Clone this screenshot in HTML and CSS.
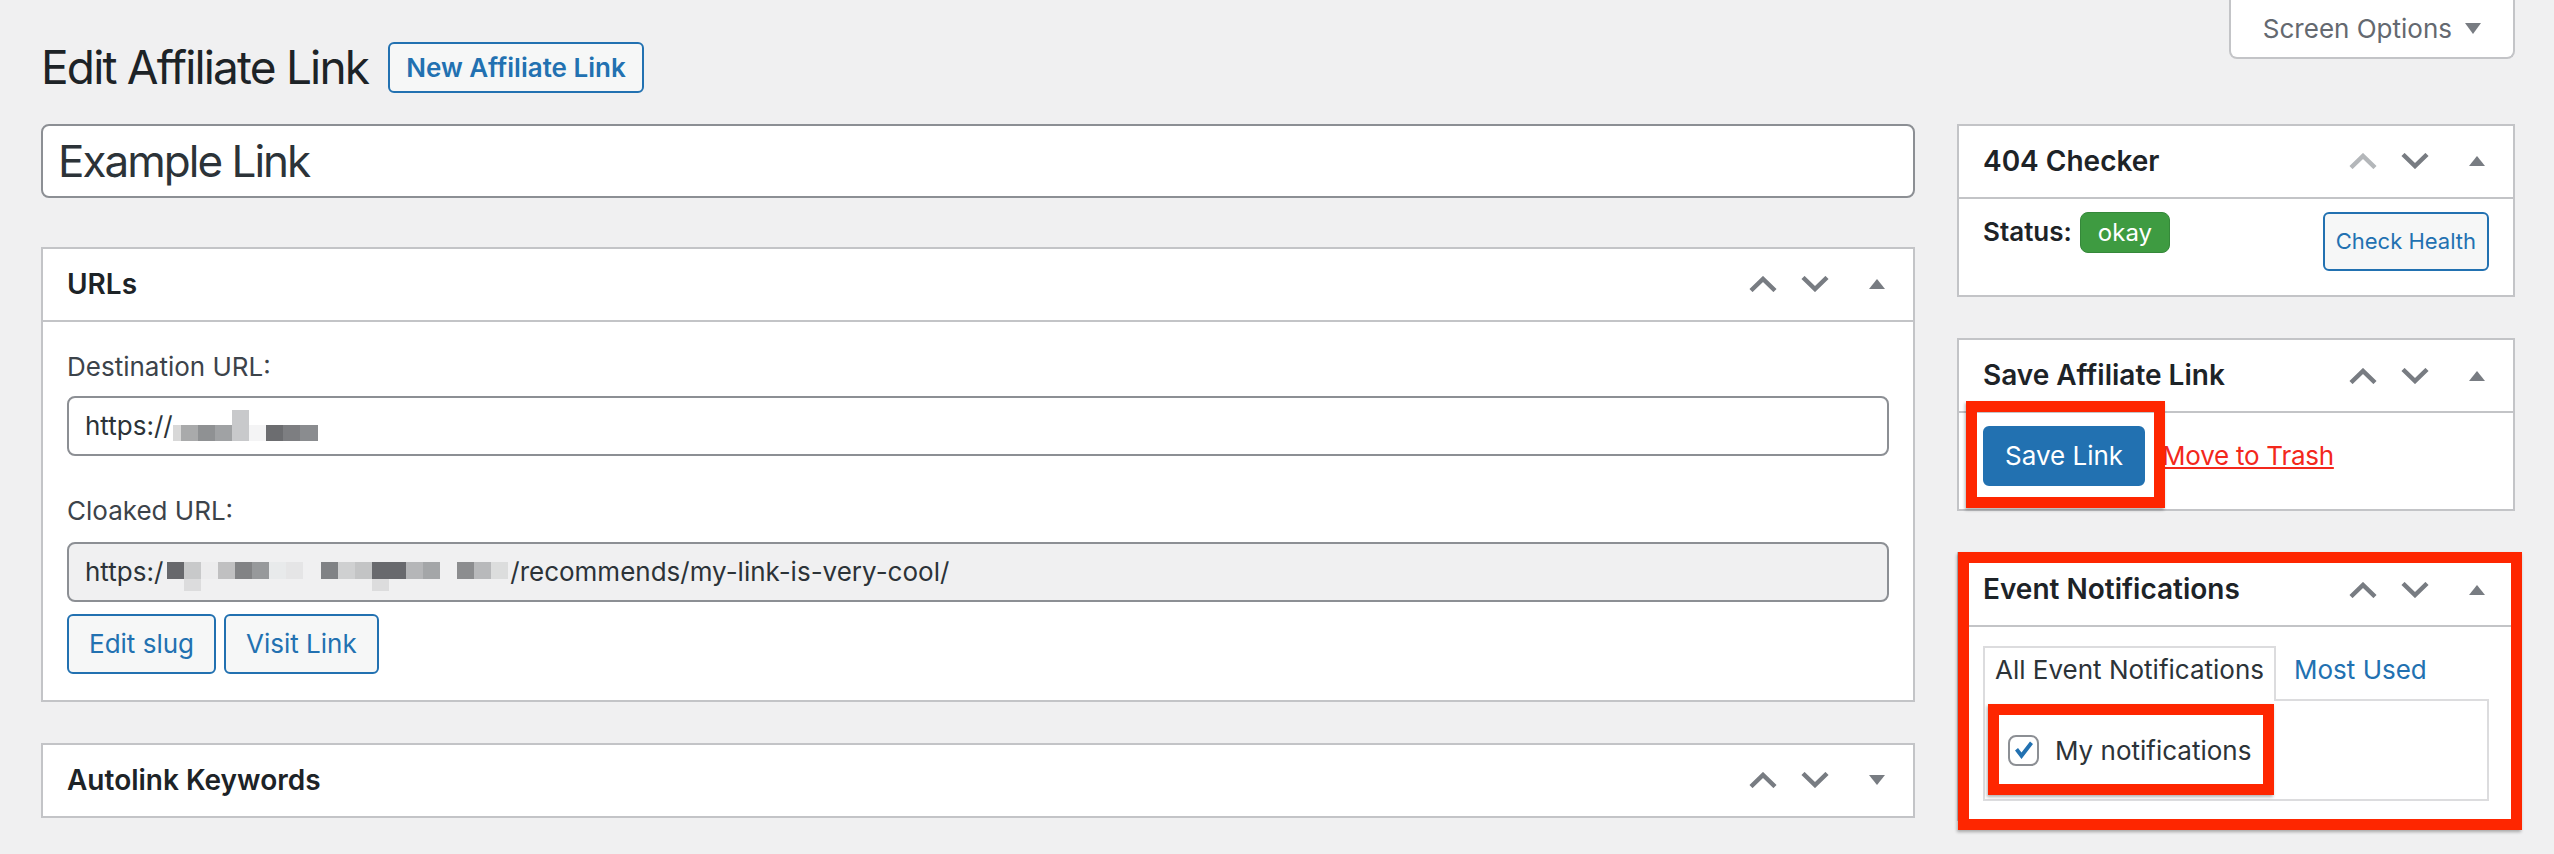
FILE: index.html
```html
<!DOCTYPE html>
<html lang="en">
<head>
    <meta charset="UTF-8">
    <meta name="viewport" content="width=device-width, initial-scale=1.0">
    <title>Edit Affiliate Link</title>
    <link rel="stylesheet" href="styles.css">
</head>
<body>
<div class="wrap">

    <div class="page-top">
        <div class="title-row">
            <h1>Edit Affiliate Link</h1>
            <a class="page-title-action" href="#">New Affiliate Link</a>
        </div>
        <button class="screen-options">Screen Options
            <svg width="16" height="11" viewBox="0 0 16 11"><path d="M0 0 H16 L8 11 Z" fill="currentColor"/></svg>
        </button>
    </div>

    <div class="post-body">
        <div class="main-col">
            <input class="title-input" type="text" value="Example Link">

            <div class="postbox urls">
                <div class="postbox-header">
                    <h2>URLs</h2>
                    <div class="handle-actions">
                        <button class="handle-btn"><svg width="28" height="16" viewBox="0 0 28 16"><path d="M2 14.5 L14 3 L26 14.5" fill="none" stroke="currentColor" stroke-width="4.5"/></svg></button>
                        <button class="handle-btn"><svg width="28" height="16" viewBox="0 0 28 16"><path d="M2 1.5 L14 13 L26 1.5" fill="none" stroke="currentColor" stroke-width="4.5"/></svg></button>
                        <button class="handle-btn toggle"><svg width="16" height="10" viewBox="0 0 16 10"><path d="M8 0 L16 10 H0 Z" fill="currentColor"/></svg></button>
                    </div>
                </div>
                <div class="inside">
                    <span class="field-label">Destination URL:</span>
                    <div class="field">https://<span class="mosaic dest"></span></div>

                    <span class="field-label second">Cloaked URL:</span>
                    <div class="field readonly">https:/<span class="mosaic cloak"></span>/recommends/my-link-is-very-cool/</div>

                    <div class="url-actions">
                        <button class="button">Edit slug</button>
                        <button class="button">Visit Link</button>
                    </div>
                </div>
            </div>

            <div class="postbox closed">
                <div class="postbox-header">
                    <h2>Autolink Keywords</h2>
                    <div class="handle-actions">
                        <button class="handle-btn"><svg width="28" height="16" viewBox="0 0 28 16"><path d="M2 14.5 L14 3 L26 14.5" fill="none" stroke="currentColor" stroke-width="4.5"/></svg></button>
                        <button class="handle-btn"><svg width="28" height="16" viewBox="0 0 28 16"><path d="M2 1.5 L14 13 L26 1.5" fill="none" stroke="currentColor" stroke-width="4.5"/></svg></button>
                        <button class="handle-btn toggle"><svg width="16" height="10" viewBox="0 0 16 10"><path d="M0 0 H16 L8 10 Z" fill="currentColor"/></svg></button>
                    </div>
                </div>
            </div>
        </div>

        <div class="side-col">
            <div class="postbox">
                <div class="postbox-header">
                    <h2>404 Checker</h2>
                    <div class="handle-actions">
                        <button class="handle-btn disabled"><svg width="28" height="16" viewBox="0 0 28 16"><path d="M2 14.5 L14 3 L26 14.5" fill="none" stroke="currentColor" stroke-width="4.5"/></svg></button>
                        <button class="handle-btn"><svg width="28" height="16" viewBox="0 0 28 16"><path d="M2 1.5 L14 13 L26 1.5" fill="none" stroke="currentColor" stroke-width="4.5"/></svg></button>
                        <button class="handle-btn toggle"><svg width="16" height="10" viewBox="0 0 16 10"><path d="M8 0 L16 10 H0 Z" fill="currentColor"/></svg></button>
                    </div>
                </div>
                <div class="inside status-row">
                    <div class="status">Status: <span class="badge">okay</span></div>
                    <button class="button small">Check Health</button>
                </div>
            </div>

            <div class="postbox">
                <div class="postbox-header">
                    <h2>Save Affiliate Link</h2>
                    <div class="handle-actions">
                        <button class="handle-btn"><svg width="28" height="16" viewBox="0 0 28 16"><path d="M2 14.5 L14 3 L26 14.5" fill="none" stroke="currentColor" stroke-width="4.5"/></svg></button>
                        <button class="handle-btn"><svg width="28" height="16" viewBox="0 0 28 16"><path d="M2 1.5 L14 13 L26 1.5" fill="none" stroke="currentColor" stroke-width="4.5"/></svg></button>
                        <button class="handle-btn toggle"><svg width="16" height="10" viewBox="0 0 16 10"><path d="M8 0 L16 10 H0 Z" fill="currentColor"/></svg></button>
                    </div>
                </div>
                <div class="inside publish-row">
                    <span class="callout save-callout"><button class="button primary">Save Link</button></span>
                    <a class="trash-link" href="#">Move to Trash</a>
                </div>
            </div>

            <div class="postbox callout-box">
                <div class="postbox-header">
                    <h2>Event Notifications</h2>
                    <div class="handle-actions">
                        <button class="handle-btn"><svg width="28" height="16" viewBox="0 0 28 16"><path d="M2 14.5 L14 3 L26 14.5" fill="none" stroke="currentColor" stroke-width="4.5"/></svg></button>
                        <button class="handle-btn"><svg width="28" height="16" viewBox="0 0 28 16"><path d="M2 1.5 L14 13 L26 1.5" fill="none" stroke="currentColor" stroke-width="4.5"/></svg></button>
                        <button class="handle-btn toggle"><svg width="16" height="10" viewBox="0 0 16 10"><path d="M8 0 L16 10 H0 Z" fill="currentColor"/></svg></button>
                    </div>
                </div>
                <div class="inside events">
                    <div class="tabs">
                        <span class="tab active">All Event Notifications</span>
                        <a class="tab-link" href="#">Most Used</a>
                    </div>
                    <div class="tabs-panel">
                        <label class="check-row callout">
                            <span class="checkbox"><svg width="27" height="27" viewBox="0 0 27 27"><path d="M5 13.5 L8 11 L11.5 15.5 L20 4.5 L23 7 L11.5 22 Z" fill="#2271b1"/></svg></span>
                            My notifications
                        </label>
                    </div>
                </div>
            </div>
        </div>
    </div>

</div>
</body>
</html>
```

FILE: styles.css
```css
* {
  box-sizing: border-box;
}

body {
  margin: 0;
  background: #f0f0f1;
  color: #3c434a;
  font-family: Inter, "Liberation Sans", sans-serif;
  font-size: 26px;
  line-height: 1.4;
}

button {
  font-family: inherit;
  cursor: pointer;
}

.wrap {
  padding: 0 39px 0 41px;
}

/* top of the page */
.page-top {
  display: flex;
  justify-content: space-between;
  align-items: flex-start;
  margin-bottom: 26px;
}

.title-row {
  display: flex;
  align-items: center;
  gap: 20px;
  padding-top: 38px;
}

h1 {
  margin: 0;
  font-size: 46px;
  font-weight: 400;
  line-height: 1.3;
  letter-spacing: -0.04em;
  color: #1d2327;
}

.page-title-action {
  padding: 8px 16px;
  border: 2px solid #2271b1;
  border-radius: 6px;
  background: #f6f7f7;
  color: #2271b1;
  font-size: 26px;
  font-weight: 600;
  line-height: 31px;
  text-decoration: none;
}

.screen-options {
  display: flex;
  align-items: center;
  gap: 13px;
  height: 59px;
  padding: 0 32px;
  border: 2px solid #c3c4c7;
  border-top: 0;
  border-radius: 0 0 8px 8px;
  background: #fff;
  color: #646970;
  font-size: 26px;
}

.screen-options svg {
  color: #787c82;
}

/* columns */
.post-body {
  display: flex;
  align-items: flex-start;
  gap: 42px;
}

.main-col {
  flex: 1;
}

.side-col {
  width: 558px;
}

.title-input {
  display: block;
  width: 100%;
  height: 74px;
  margin: 0 0 49px;
  padding: 0 15px;
  border: 2px solid #8c8f94;
  border-radius: 8px;
  background: #fff;
  color: #2c3338;
  font-family: inherit;
  font-size: 44px;
  letter-spacing: -0.045em;
}

/* postboxes */
.postbox {
  position: relative;
  margin-bottom: 41px;
  border: 2px solid #c3c4c7;
  background: #fff;
}

.postbox-header {
  display: flex;
  justify-content: space-between;
  align-items: center;
  border-bottom: 2px solid #c3c4c7;
}

.closed .postbox-header {
  border-bottom: 0;
}

.postbox h2 {
  margin: 0;
  padding: 16px 24px;
  font-size: 28px;
  font-weight: 600;
  line-height: 1.4;
  color: #1d2327;
}

.handle-actions {
  display: flex;
  align-self: stretch;
}

.handle-btn {
  display: flex;
  align-items: center;
  justify-content: center;
  width: 52px;
  padding: 0;
  border: 0;
  background: none;
  color: #787c82;
}

.handle-btn.toggle {
  width: 72px;
}

.handle-btn.disabled {
  color: #b4b7ba;
}

.inside {
  padding: 13px 24px 24px;
}

.urls .inside {
  padding: 27px 24px 26px;
}

.field-label {
  display: block;
  margin-bottom: 11px;
}

.field-label.second {
  margin-top: 37px;
  margin-bottom: 12px;
}

.field {
  height: 60px;
  padding: 0 16px;
  border: 2px solid #8c8f94;
  border-radius: 8px;
  color: #2c3338;
  line-height: 56px;
  white-space: nowrap;
}

.field.readonly {
  background: #f0f0f1;
}

/* blurred parts of the urls */
.mosaic {
  display: inline-block;
}

.mosaic.dest {
  width: 145px;
  height: 31px;
  vertical-align: -6px;
  background:
    linear-gradient(#c8c9cb, #c8c9cb) 59px 0 / 17px 15px no-repeat,
    linear-gradient(to right, #d8d8d8 0 8px, #a9aaab 8px 25px, #8f9193 25px 42px, #a0a2a4 42px 59px,
      #c8c9cb 59px 76px, #f4f4f5 76px 93px, #6c6d70 93px 110px, #7d7e81 110px 127px, #8a8c8f 127px 145px) 0 15px / 145px 16px no-repeat;
}

.mosaic.cloak {
  width: 341px;
  height: 29px;
  margin: 0 2px 0 4px;
  vertical-align: -10px;
  background:
    linear-gradient(#dcdcdd, #dcdcdd) 17px 17px / 17px 12px no-repeat,
    linear-gradient(#dcdcdd, #dcdcdd) 205px 17px / 17px 12px no-repeat,
    linear-gradient(to right, #67686c 0 17px, #c8c9ca 17px 34px, #ececed 34px 51px, #c0c0c1 51px 68px,
      #828385 68px 85px, #97999b 85px 102px, #e8eaeb 102px 119px, #e5e5e6 119px 136px,
      transparent 136px 154px, #808285 154px 171px, #cfd0d1 171px 188px, #c3c4c5 188px 205px,
      #68696d 205px 239px, #b5b6b8 239px 256px, #a4a6a8 256px 273px, transparent 273px 290px,
      #8c8d8f 290px 307px, #b8b9bb 307px 324px, #dcdddd 324px 341px) 0 0 / 341px 17px no-repeat;
}

.url-actions {
  display: flex;
  gap: 8px;
  margin-top: 12px;
}

.button {
  height: 60px;
  padding: 0 20px;
  border: 2px solid #2271b1;
  border-radius: 6px;
  background: #f6f7f7;
  color: #2271b1;
  font-size: 26px;
  line-height: 56px;
  white-space: nowrap;
}

.button.small {
  height: 59px;
  padding: 0 11px;
  font-size: 22px;
  line-height: 55px;
}

.button.primary {
  background: #2271b1;
  color: #fff;
}

/* sidebar */
.status-row {
  display: flex;
  justify-content: space-between;
  align-items: flex-start;
}

.status {
  display: flex;
  align-items: center;
  gap: 8px;
  height: 41px;
  font-weight: 600;
  color: #1d2327;
}

.badge {
  height: 41px;
  padding: 0 17px;
  border: 1px solid #35883a;
  border-radius: 8px;
  background: #3e9b41;
  color: #fff;
  font-size: 24px;
  font-weight: 400;
  line-height: 39px;
}

.publish-row {
  display: flex;
  align-items: center;
  gap: 17px;
  padding-bottom: 23px;
}

.trash-link {
  color: #f3281c;
  text-decoration: underline;
  letter-spacing: -0.01em;
}

.events {
  padding: 19px 24px 18px;
}

.tabs {
  display: flex;
  align-items: flex-start;
}

.tab.active {
  position: relative;
  z-index: 1;
  margin-bottom: -2px;
  padding: 4px 10px 12px;
  border: 2px solid #dcdcde;
  border-bottom: 0;
  background: #fff;
  color: #2c3338;
}

.tab-link {
  margin-left: 18px;
  padding-top: 6px;
  color: #2271b1;
  text-decoration: none;
}

.tabs-panel {
  padding: 28px 23px 25px;
  border: 2px solid #dcdcde;
}

.check-row {
  display: inline-flex;
  align-items: center;
  gap: 16px;
  height: 44px;
  color: #2c3338;
}

.checkbox {
  display: flex;
  align-items: center;
  justify-content: center;
  width: 31px;
  height: 31px;
  border: 2px solid #8c8f94;
  border-radius: 8px;
  background: #fff;
}

/* red screenshot annotations */
.callout {
  position: relative;
}

.callout::after,
.callout-box::after {
  content: "";
  position: absolute;
  border: 11px solid #fe2600;
  box-shadow: -1px 2px 3px rgba(0, 0, 0, 0.3);
  pointer-events: none;
}

.save-callout::after {
  top: -25px;
  right: -20px;
  bottom: -22px;
  left: -17px;
}

.callout-box::after {
  top: -2px;
  right: -9px;
  bottom: -11px;
  left: -1px;
}

.check-row.callout::after {
  top: -25px;
  right: -23px;
  bottom: -22px;
  left: -20px;
}
```
